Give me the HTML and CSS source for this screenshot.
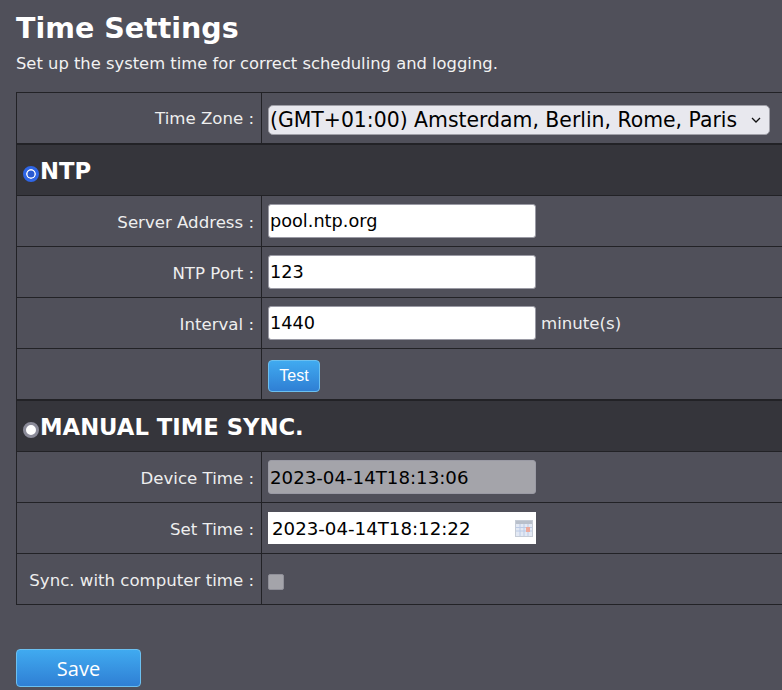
FILE: index.html
```html
<!DOCTYPE html>
<html lang="en">
<head>
  <meta charset="UTF-8" />
  <meta name="viewport" content="width=device-width, initial-scale=1.0" />
  <title>Time Settings</title>
  <link rel="stylesheet" href="styles.css">
</head>
<body>
  <h1 class="page-title">Time Settings</h1>
  <p class="page-desc">Set up the system time for correct scheduling and logging.</p>

  <table class="settings">
    <tr>
      <td class="label">Time Zone :</td>
      <td>
        <select class="zone-select">
          <option>(GMT+01:00) Amsterdam, Berlin, Rome, Paris</option>
        </select>
      </td>
    </tr>
    <tr class="section">
      <td colspan="2"><span class="radio on"></span>NTP</td>
    </tr>
    <tr>
      <td class="label">Server Address :</td>
      <td><input class="field" type="text" value="pool.ntp.org"></td>
    </tr>
    <tr>
      <td class="label">NTP Port :</td>
      <td><input class="field" type="text" value="123"></td>
    </tr>
    <tr>
      <td class="label">Interval :</td>
      <td><input class="field" type="text" value="1440"><span class="unit">minute(s)</span></td>
    </tr>
    <tr>
      <td class="label"></td>
      <td><button class="btn btn-test" type="button">Test</button></td>
    </tr>
    <tr class="section">
      <td colspan="2"><span class="radio"></span>MANUAL TIME SYNC.</td>
    </tr>
    <tr>
      <td class="label">Device Time :</td>
      <td><input class="field disabled" type="text" value="2023-04-14T18:13:06" disabled></td>
    </tr>
    <tr>
      <td class="label">Set Time :</td>
      <td>
        <div class="date-field">
          <input type="text" value="2023-04-14T18:12:22">
          <svg class="cal-icon" width="18" height="17" viewBox="0 0 18 17">
            <rect x="0.5" y="0.5" width="17" height="16" fill="#e3e9f4" stroke="#c6ccd6"/>
            <rect x="1" y="1" width="16" height="3" fill="#b9c0cb"/>
            <path d="M1 7.5h16M1 11h16M5 4v12M9 4v12M13 4v12" stroke="#bccbe6" fill="none"/>
            <rect x="11" y="7" width="4" height="5" fill="#eda99c"/>
          </svg>
        </div>
      </td>
    </tr>
    <tr>
      <td class="label">Sync. with computer time :</td>
      <td><span class="check"></span></td>
    </tr>
  </table>

  <button class="btn btn-save" type="button">Save</button>
</body>
</html>
```

FILE: styles.css
```css
html, body {
  overflow: hidden;
  height: 100%;
}
body {
  margin: 0;
  padding: 0 0 0 16px;
  font-family: "DejaVu Sans", Verdana, sans-serif;
  font-size: 16px;
  background: #50505a;
  color: white;
}
.page-title {
  margin: 0;
  padding-top: 12px;
  font-size: 28.5px;
  line-height: 34px;
  font-weight: bold;
}
.page-desc {
  margin: 0;
  padding-top: 5px;
  font-size: 16.35px;
  line-height: 26px;
  color: #f2f2f2;
}
.settings {
  margin-top: 15px;
  width: 800px;
  table-layout: fixed;
  border-collapse: collapse;
}
.settings td {
  height: 51px;
  padding: 0 0 0 6px;
  border: 1px solid #222226;
  vertical-align: middle;
  color: #eee;
  font-size: 16.6px;
  box-sizing: border-box;
}
.settings td.label {
  width: 245px;
  padding: 2px 7px 0 0;
  text-align: right;
}
.settings .section td {
  height: 52px;
  padding-top: 3px;
  background: #35353b;
  border-top: 2px solid #222226;
  color: white;
  font-size: 22.7px;
  font-weight: bold;
}
.radio {
  display: inline-block;
  width: 16px;
  height: 16px;
  margin-right: 1px;
  box-sizing: border-box;
  border: 3px solid #8b8b99;
  border-radius: 50%;
  background: white;
  vertical-align: -3px;
}
.radio.on {
  border-color: #2f66e6;
  background: #2a5ad0;
  box-shadow: inset 0 0 0 1.5px white;
}
.zone-select {
  display: block;
  width: 502px;
  height: 30px;
  margin-top: 4px;
  padding: 0 0 0 1px;
  appearance: none;
  font-family: inherit;
  font-size: 20.4px;
  color: black;
  border: 1px solid #a0a0a8;
  border-radius: 5px;
  background: #e8e8ee url("data:image/svg+xml,%3Csvg xmlns='http://www.w3.org/2000/svg' width='10' height='6'%3E%3Cpath d='M1 1l4 4 4-4' fill='none' stroke='%23111' stroke-width='1.3'/%3E%3C/svg%3E") no-repeat right 8px center;
}
.field {
  width: 268px;
  height: 34px;
  box-sizing: border-box;
  padding: 0 1px;
  font-family: inherit;
  font-size: 17.7px;
  color: black;
  background: white;
  border: 1px solid #9a9aa4;
  border-radius: 3px;
  vertical-align: middle;
}
.field.disabled {
  font-size: 18.2px;
  background: #a4a4aa;
  color: black;
}
.unit {
  margin-left: 5px;
  vertical-align: middle;
}
.date-field {
  display: flex;
  align-items: center;
  width: 268px;
  height: 32px;
  box-sizing: border-box;
  padding: 0 0 0 4px;
  background: white;
}
.date-field input {
  flex: 1;
  min-width: 0;
  padding: 0;
  border: none;
  outline: none;
  font-family: inherit;
  font-size: 18.2px;
  color: black;
}
.cal-icon {
  flex: none;
  margin-right: 3px;
}
.check {
  display: block;
  width: 16px;
  height: 16px;
  margin-top: 5px;
  background: #a4a4aa;
  border: 1px solid #8f8f98;
  border-radius: 2px;
  box-sizing: border-box;
}
.btn {
  display: block;
  color: white;
  border: 1px solid #6cc0f0;
  background: linear-gradient(to bottom, #40aaf0, #2f7fd4);
  cursor: pointer;
}
.btn-test {
  width: 52px;
  height: 32px;
  margin-top: 5px;
  font-family: "Liberation Sans", Arial, sans-serif;
  font-size: 16px;
  border-radius: 4px;
}
.btn-save {
  margin-top: 44px;
  width: 125px;
  height: 38px;
  font-family: "Open Sans", sans-serif;
  font-size: 20px;
  border-radius: 4px;
}
```
